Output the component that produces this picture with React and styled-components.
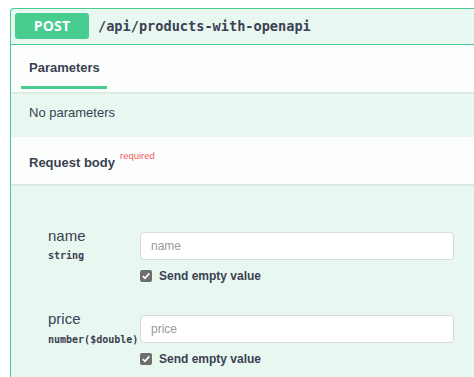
import React from "react";
import styled, { createGlobalStyle } from "styled-components";

const Global = createGlobalStyle`
  html, body { margin: 0; padding: 0; background: #fff; overflow: hidden; }
  body { font-family: "Liberation Sans", Arial, sans-serif; color: #3b4151; }
  * { box-sizing: border-box; }
`;

const Page = styled.div`
  padding: 8px 0 0 10px;
  width: 474px;
  height: 377px;
  overflow: hidden;
`;

const OpBlock = styled.div`
  width: 490px;
  border: 1px solid #49cc90;
  border-right: none;
  border-bottom: none;
  border-radius: 4px 0 0 0;
  background: #e9f7f1;
  min-height: 380px;
`;

const Summary = styled.div`
  display: flex;
  align-items: center;
  height: 36px;
  padding: 3px 4px 5px 4px;
  border-bottom: 1px solid #49cc90;
`;

const Method = styled.span`
  display: flex;
  align-items: center;
  justify-content: center;
  width: 74px;
  height: 26px;
  border-radius: 3px;
  background: #49cc90;
  color: #fff;
  font-family: "Open Sans", sans-serif;
  font-weight: 700;
  font-size: 14px;
  letter-spacing: 0.2px;
`;

const Path = styled.span`
  margin-left: 9px;
  font-family: "DejaVu Sans Mono", monospace;
  font-weight: 700;
  font-size: 13.6px;
  color: #3b4151;
`;

const SectionHeader = styled.div`
  display: flex;
  align-items: ${(p) => (p.$tabs ? "stretch" : "center")};
  height: 47px;
  padding: ${(p) => (p.$tabs ? "0 0 0 10px" : "3px 0 0 18px")};
  background: rgba(255, 255, 255, 0.85);
  box-shadow: 0 1px 2px rgba(0, 0, 0, 0.1);
  position: relative;
`;

const Tab = styled.div`
  display: flex;
  align-items: center;
  padding: 4px 8px 0;
  width: 86px;
  font-weight: 700;
  font-size: 13px;
  border-bottom: 3px solid #49cc90;
  margin-bottom: 3px;
`;

const Title = styled.h4`
  margin: 0;
  font-weight: 700;
  font-size: 13px;
  color: #3b4151;
`;

const Required = styled.sup`
  margin-left: 5px;
  font-size: 9.5px;
  font-weight: 400;
  color: #f35b5b;
  position: relative;
  top: -3px;
`;

const NoParams = styled.div`
  height: 45px;
  display: flex;
  align-items: center;
  padding: 0 0 4px 18px;
  font-size: 13px;
`;

const Body = styled.div`
  padding: 43px 0 0 37px;
  display: flex;
  flex-direction: column;
  gap: 27px;
`;

const ParamRow = styled.div`
  display: grid;
  grid-template-columns: 92px 314px;
`;

const LabelCell = styled.div`
  display: flex;
  flex-direction: column;
`;

const ParamName = styled.div`
  font-size: 15px;
  line-height: 18px;
  color: #3b4151;
`;

const ParamType = styled.div`
  margin-top: ${(p) => p.$gap}px;
  font-family: "DejaVu Sans Mono", monospace;
  font-weight: 700;
  font-size: 10px;
  line-height: 14px;
  color: #3b4151;
  white-space: nowrap;
`;

const InputCell = styled.div`
  display: flex;
  flex-direction: column;
  padding-top: 5px;
`;

const TextInput = styled.input`
  height: 28px;
  width: 314px;
  border: 1px solid #d9d9d9;
  border-radius: 4px;
  background: #fff;
  padding: 0 10px;
  font-family: "Liberation Sans", Arial, sans-serif;
  font-size: 12px;
  color: #3b4151;
  outline: none;
  &::placeholder { color: #9a9a9a; }
`;

const CheckLine = styled.label`
  display: flex;
  align-items: center;
  gap: 7px;
  margin-top: 9px;
  height: 14px;
  font-weight: 700;
  font-size: 12px;
  color: #3b4151;
`;

const Box = styled.span`
  display: flex;
  align-items: center;
  justify-content: center;
  width: 12px;
  height: 12px;
  border-radius: 2px;
  background: #6e6e6e;
`;

const Check = () => (
  <Box>
    <svg width="10" height="10" viewBox="0 0 10 10">
      <path d="M1.8 5.2 L4 7.3 L8.3 2.4" fill="none" stroke="#fff" strokeWidth="1.7" />
    </svg>
  </Box>
);

const params = [
  { name: "name", type: "string", gap: 4 },
  { name: "price", type: "number($double)", gap: 5 },
];

export default function App() {
  return (
    <Page>
      <Global />
      <OpBlock>
        <Summary>
          <Method>POST</Method>
          <Path>/api/products-with-openapi</Path>
        </Summary>
        <SectionHeader $tabs>
          <Tab>Parameters</Tab>
        </SectionHeader>
        <NoParams>No parameters</NoParams>
        <SectionHeader>
          <Title>
            Request body<Required>required</Required>
          </Title>
        </SectionHeader>
        <Body>
          {params.map((p) => (
            <ParamRow key={p.name}>
              <LabelCell>
                <ParamName>{p.name}</ParamName>
                <ParamType $gap={p.gap}>{p.type}</ParamType>
              </LabelCell>
              <InputCell>
                <TextInput placeholder={p.name} />
                <CheckLine>
                  <Check />
                  Send empty value
                </CheckLine>
              </InputCell>
            </ParamRow>
          ))}
        </Body>
      </OpBlock>
    </Page>
  );
}
